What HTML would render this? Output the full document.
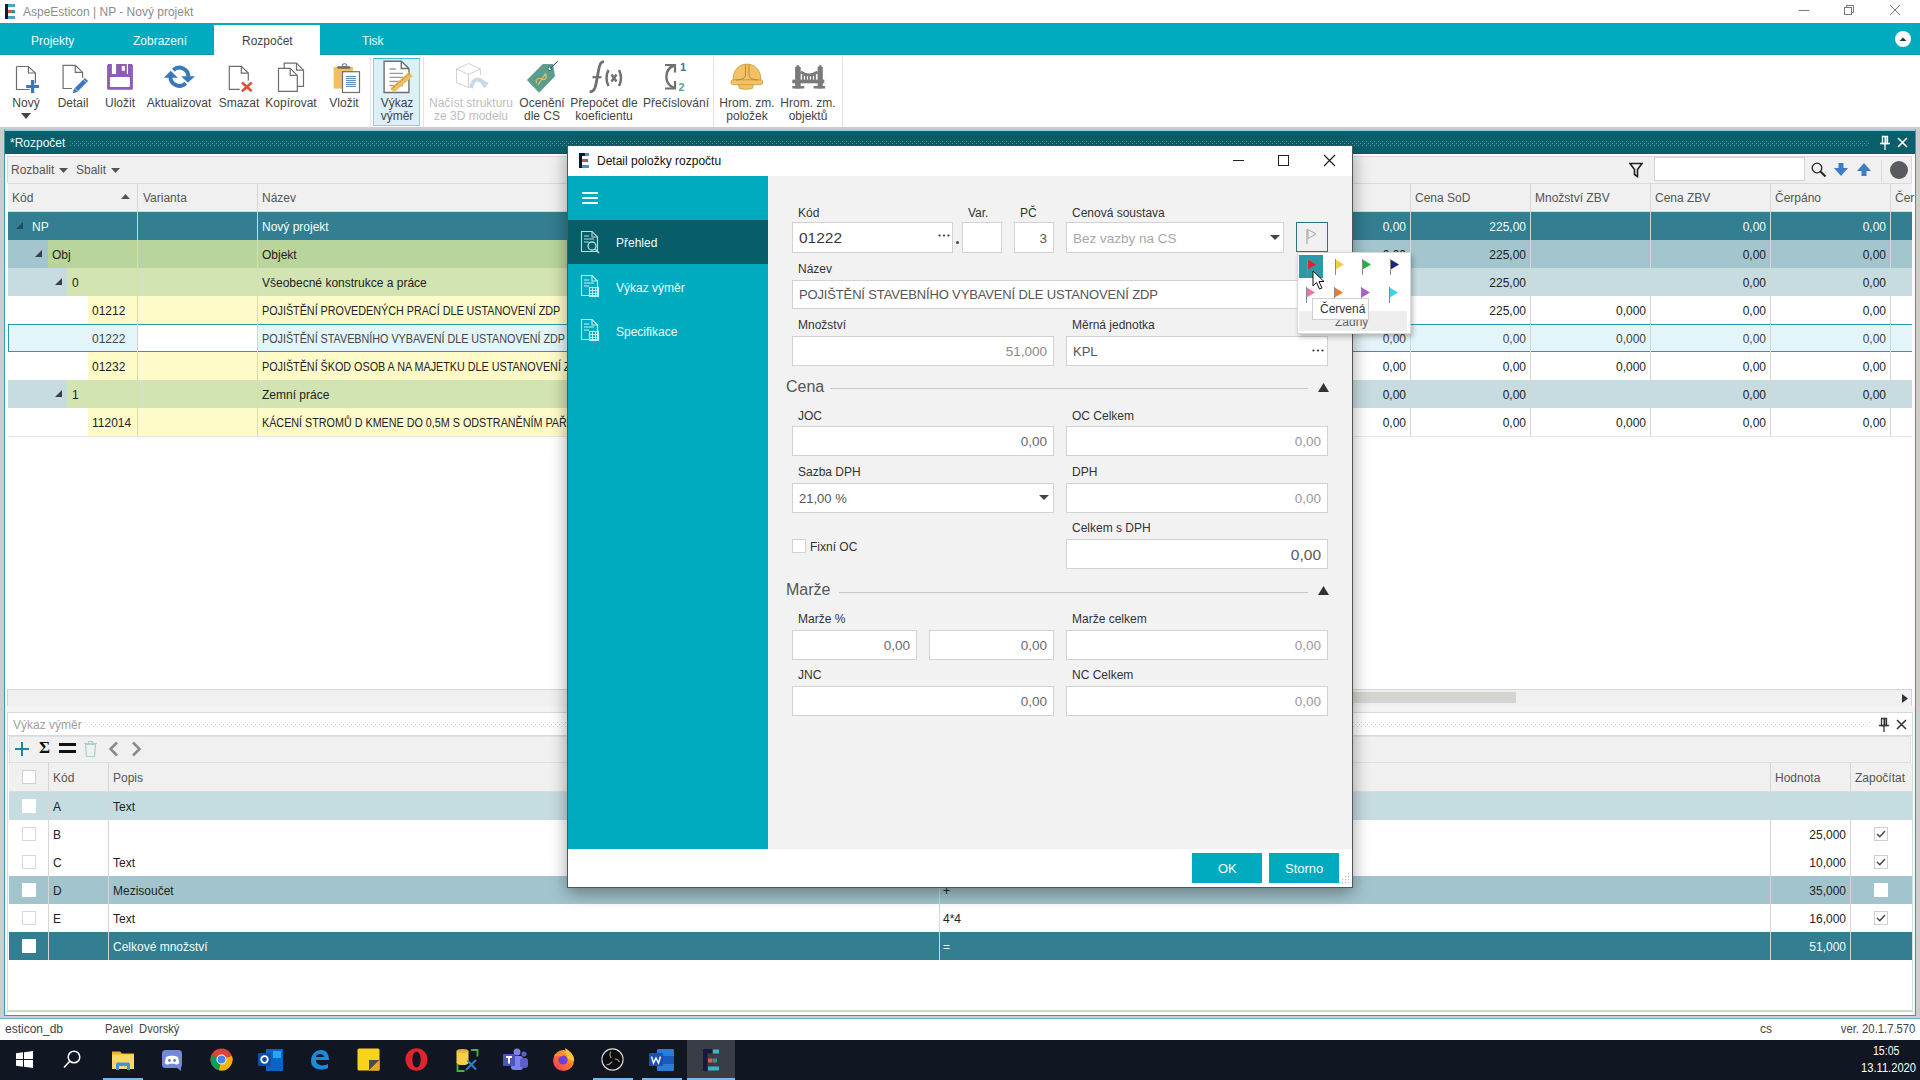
<!DOCTYPE html>
<html><head><meta charset="utf-8">
<style>
*{box-sizing:border-box;margin:0;padding:0}
html,body{width:1920px;height:1080px;overflow:hidden;background:#fff;font-family:"Liberation Sans",sans-serif;font-size:12px;color:#333}
.a{position:absolute}
.t{position:absolute;white-space:nowrap;line-height:1}
</style></head><body>

<div class="a" style="left:0px;top:0px;width:1920px;height:23px;background:#fff;"></div>
<div class="a" style="left:5px;top:4px;width:3px;height:15px;background:#141a33;"></div>
<div class="a" style="left:8px;top:4px;width:7px;height:3px;background:#4aa3c0;"></div>
<div class="a" style="left:8px;top:10px;width:4px;height:3px;background:#d9553a;"></div>
<div class="a" style="left:12px;top:10px;width:3px;height:3px;background:#2f8fa8;"></div>
<div class="a" style="left:8px;top:16px;width:7px;height:3px;background:#4aa3c0;"></div>
<div class="t" style="left:23px;top:6px;color:#8c8c8c;font-size:12px;">AspeEsticon | NP - Nový projekt</div>
<div class="a" style="left:1799px;top:10px;width:10px;height:1px;background:#777;"></div>
<svg class="a" style="left:1843px;top:4px;" width="12" height="12" viewBox="0 0 12 12"><rect x="1.5" y="3.5" width="7" height="7" fill="none" stroke="#777"/><path d="M3.5 3.5V1.5h7v7h-2" fill="none" stroke="#777"/></svg>
<svg class="a" style="left:1889px;top:4px;" width="12" height="12" viewBox="0 0 12 12"><path d="M1 1L11 11M11 1L1 11" stroke="#777" stroke-width="1"/></svg>
<div class="a" style="left:0px;top:23px;width:1920px;height:32px;background:#00abbf;"></div>
<div class="a" style="left:0px;top:54px;width:1920px;height:1px;background:#1593a4;"></div>
<div class="a" style="left:214px;top:25px;width:106px;height:30px;background:#fff;"></div>
<div class="t" style="left:31px;top:35px;color:#eaffff;font-size:12px;">Projekty</div>
<div class="t" style="left:133px;top:35px;color:#eaffff;font-size:12px;">Zobrazení</div>
<div class="t" style="left:242px;top:35px;color:#444;font-size:12px;">Rozpočet</div>
<div class="t" style="left:362px;top:35px;color:#eaffff;font-size:12px;">Tisk</div>
<svg class="a" style="left:1895px;top:31px;" width="16" height="16" viewBox="0 0 16 16"><circle cx="8" cy="8" r="8" fill="#fff"/><path d="M4.5 10L8 6.5L11.5 10Z" fill="#333"/></svg>
<div class="a" style="left:0px;top:55px;width:1920px;height:72px;background:#fff;"></div>
<div class="a" style="left:373px;top:58px;width:47px;height:68px;background:#dcf0f7;border:1px solid #86d3df;border-top:1px solid #3fb9c8"></div>
<div class="a" style="left:370px;top:57px;width:1px;height:70px;background:#e2e2e2;"></div>
<div class="a" style="left:423px;top:57px;width:1px;height:70px;background:#e2e2e2;"></div>
<div class="a" style="left:713px;top:57px;width:1px;height:70px;background:#e2e2e2;"></div>
<div class="a" style="left:842px;top:57px;width:1px;height:70px;background:#e2e2e2;"></div>
<svg class="a" style="left:14px;top:64px;" width="28" height="32" viewBox="0 0 28 32"><path d="M2.5 2.5H14.4L21.4 9V19.5M15.7 25.5H2.5V2.5" fill="none" stroke="#6e6e6e" stroke-width="1.2"/><path d="M14.4 2.5V9H21.4" fill="none" stroke="#6e6e6e" stroke-width="1.2"/><path d="M12.2 22.5H25M18.6 16V29" stroke="#3a78bd" stroke-width="3.2"/></svg>
<svg class="a" style="left:62px;top:64px;" width="30" height="32" viewBox="0 0 30 32"><path d="M13.3 1.3L20.6 8.4V13.7M10 24.5H1.1V1.3H13.3" fill="none" stroke="#6e6e6e" stroke-width="1.2"/><path d="M13.3 1.3V8.4H20.6" fill="none" stroke="#6e6e6e" stroke-width="1.2"/><path d="M10.8 29.2L11.9 24.9L22.9 13.9L26.1 17.1L15.1 28.1Z" fill="#3a78bd"/><path d="M21.3 15.5L24.5 18.7M12.6 24.2L15.8 27.4" stroke="#dceaf7" stroke-width="0.8"/></svg>
<svg class="a" style="left:106px;top:63px;" width="28" height="28" viewBox="0 0 28 28"><rect x="1.1" y="1" width="25.8" height="25.7" rx="1.5" fill="#8c5db4"/><rect x="5.9" y="0" width="4.2" height="11" fill="#fff"/><rect x="20.8" y="0" width="1.2" height="11" fill="#fff"/><rect x="15.8" y="2.9" width="3.1" height="4.9" fill="#fff"/><rect x="3.9" y="14" width="20" height="10.1" rx="1" fill="#fff"/></svg>
<svg class="a" style="left:163px;top:64px;" width="34" height="26" viewBox="0 0 34 26"><path d="M10.3 6.1A9 9 0 0 1 25.4 12.8" fill="none" stroke="#3a78bd" stroke-width="4"/><path d="M22.8 19.2A9 9 0 0 1 7.4 12.8" fill="none" stroke="#3a78bd" stroke-width="4"/><path d="M18 12.2H32L24.9 18.7Z" fill="#3a78bd"/><path d="M0.9 13.7H14.8L7.7 6.7Z" fill="#3a78bd"/></svg>
<svg class="a" style="left:228px;top:64px;" width="26" height="30" viewBox="0 0 26 30"><path d="M11.7 25.3H1.3V2.3H13.3L20.3 9.1V16.4" fill="none" stroke="#6e6e6e" stroke-width="1.2"/><path d="M13.3 2.3V9.1H20.3" fill="none" stroke="#6e6e6e" stroke-width="1.2"/><path d="M14 18.5L23.7 27.3M23.7 18.5L14 27.3" stroke="#d9553a" stroke-width="2.6"/></svg>
<svg class="a" style="left:276px;top:62px;" width="32" height="32" viewBox="0 0 32 32"><path d="M8.2 1.2H20.5L27.5 8.2V24.4H8.2Z" fill="#fff" stroke="#6e6e6e" stroke-width="1.2"/><path d="M20.5 1.2V8.2H27.5" fill="none" stroke="#6e6e6e" stroke-width="1.2"/><path d="M2.5 6.4H14.2L21.3 13.4V29.3H2.5Z" fill="#fff" stroke="#6e6e6e" stroke-width="1.2"/><path d="M14.2 6.4V13.4H21.3" fill="none" stroke="#6e6e6e" stroke-width="1.2"/></svg>
<svg class="a" style="left:332px;top:62px;" width="30" height="32" viewBox="0 0 30 32"><rect x="1.6" y="5" width="19.4" height="21.6" fill="#f0c060"/><rect x="5" y="4.2" width="13.5" height="2.6" rx="1.3" fill="#6a6a6a"/><ellipse cx="12.5" cy="3.2" rx="2.2" ry="1.5" fill="none" stroke="#6a6a6a" stroke-width="1"/><rect x="10.5" y="9.7" width="17" height="20.8" fill="#fff" stroke="#707070" stroke-width="1.2"/><path d="M14 14.4H23.8M14 16.4H23.8M14 18.4H23.8M14 20.4H23.8M14 22.4H23.8M14 24.4H23.8" stroke="#3a6fb0" stroke-width="0.9"/></svg>
<svg class="a" style="left:383px;top:60px;" width="31" height="34" viewBox="0 0 31 34"><path d="M1.1 1.2H18.3L25.9 8.5V32.5H1.1Z" fill="#fff" stroke="#6e6e6e" stroke-width="1.4"/><path d="M18.3 1.2V8.5H25.9" fill="none" stroke="#6e6e6e" stroke-width="1.4"/><path d="M6.5 9H12.8M6.5 13.4H20M6.5 17.4H20M6.5 21.5H20M6.5 25.5H20" stroke="#9a9a9a" stroke-width="1.4"/><path d="M7.36 28.28L26.06 12.08L29.74 16.32L11.04 32.52Z" fill="#efbd5e"/><path d="M8.3 29.3L26.9 13.1" stroke="#8a6a30" stroke-width="1" stroke-dasharray="1 1"/></svg>
<svg class="a" style="left:455px;top:62px;" width="34" height="30" viewBox="0 0 34 30"><path d="M1.5 7L13.5 1.5L25.5 7L13.5 12.5Z" fill="none" stroke="#d2d2d2" stroke-width="1"/><path d="M1.5 7V20.5L13.5 25.5V12.5M25.5 7V13" fill="none" stroke="#d2d2d2" stroke-width="1"/><path d="M16 26Q19 12 29 21" fill="none" stroke="#c8d9e8" stroke-width="4"/><path d="M25 20H34L29.5 26.5Z" fill="#c8d9e8"/></svg>
<svg class="a" style="left:525px;top:60px;" width="36" height="36" viewBox="0 0 36 36"><path d="M1.9 20L17.8 4.1H28L30 16.3L14 32.7Z" fill="#5b9e8d"/><circle cx="24.8" cy="8.8" r="2.4" fill="#3d7566"/><circle cx="24.8" cy="8.8" r="1.3" fill="#fff"/><path d="M24.8 8.8L32.8 1.3" stroke="#444" stroke-width="1"/><path d="M12 23C9 20 14 17 17 19C20 21 23 17 20 14M13 25L21 13" fill="none" stroke="#e8c35a" stroke-width="1.2"/></svg>
<svg class="a" style="left:588px;top:60px;" width="38" height="36" viewBox="0 0 38 36"><path d="M1.6 31.7C5 32 7 30 8 24L11 8C12 3 14 1.7 16 1.7" fill="none" stroke="#707070" stroke-width="2.8"/><path d="M4.5 17.2H13.5" stroke="#707070" stroke-width="2.2"/><path d="M20.5 10Q16.5 18 20.5 26M31 10Q35 18 31 26" fill="none" stroke="#707070" stroke-width="2.5"/><path d="M23.5 14.5L28.5 21.5M28.5 14.5L23.5 21.5" stroke="#707070" stroke-width="2.5"/></svg>
<svg class="a" style="left:662px;top:61px;" width="30" height="32" viewBox="0 0 30 32"><path d="M12.2 4.5C2 8 1.5 23 12.2 27" fill="none" stroke="#707070" stroke-width="2.4"/><path d="M3 4H13V11.5M3 27.5H13V20" fill="none" stroke="#707070" stroke-width="2.2"/><text x="18" y="9.5" font-family="Liberation Sans" font-weight="bold" font-size="11" fill="#3a6fb0">1</text><text x="16.5" y="29.5" font-family="Liberation Sans" font-weight="bold" font-size="11" fill="#5a9e8f">2</text></svg>
<svg class="a" style="left:730px;top:63px;" width="34" height="28" viewBox="0 0 34 28"><path d="M3 17C3 7 9 1.1 16.8 1.1C24.6 1.1 31 7 31 17Z" fill="#f2c263" stroke="#c99a45" stroke-width="0.8"/><rect x="0.9" y="16.9" width="31.9" height="4.8" rx="2.4" fill="#f2c263" stroke="#c99a45" stroke-width="0.8"/><path d="M8.4 21.7H23.4L22.4 25.5Q16 27.2 9.4 25.5Z" fill="#f2c263" stroke="#c99a45" stroke-width="0.8"/><path d="M15.5 1.5V12Q15.5 16.5 6 17M19 1.5V12Q19 16.5 28 17" fill="none" stroke="#b58840" stroke-width="1"/></svg>
<svg class="a" style="left:791px;top:63px;" width="36" height="28" viewBox="0 0 36 28"><rect x="4.1" y="4" width="5.6" height="21.5" fill="#7a7a7a"/><rect x="26.6" y="4" width="5.2" height="21.5" fill="#7a7a7a"/><circle cx="6.9" cy="3.5" r="1.6" fill="#7a7a7a"/><circle cx="29.2" cy="3.5" r="1.6" fill="#7a7a7a"/><rect x="1.3" y="16.6" width="32" height="3.7" fill="#7a7a7a"/><rect x="1.3" y="23" width="12" height="2.5" fill="#7a7a7a"/><rect x="22.6" y="23" width="11.5" height="2.5" fill="#7a7a7a"/><path d="M9.7 9Q18 15 26.6 9" fill="none" stroke="#7a7a7a" stroke-width="3"/><path d="M12 11.5V17M15 12.7V17M18 13V17M21 12.7V17M24 11.5V17" stroke="#7a7a7a" stroke-width="1.8"/></svg>
<div class="t" style="left:-74px;width:200px;text-align:center;top:97px;color:#444;font-size:12px">Nový</div>
<svg class="a" style="left:21px;top:113px;" width="10" height="6" viewBox="0 0 10 6"><path d="M0 0H10L5 6Z" fill="#444"/></svg>
<div class="t" style="left:-27px;width:200px;text-align:center;top:97px;color:#444;font-size:12px">Detail</div>
<div class="t" style="left:20px;width:200px;text-align:center;top:97px;color:#444;font-size:12px">Uložit</div>
<div class="t" style="left:79px;width:200px;text-align:center;top:97px;color:#444;font-size:12px">Aktualizovat</div>
<div class="t" style="left:139px;width:200px;text-align:center;top:97px;color:#444;font-size:12px">Smazat</div>
<div class="t" style="left:191px;width:200px;text-align:center;top:97px;color:#444;font-size:12px">Kopírovat</div>
<div class="t" style="left:244px;width:200px;text-align:center;top:97px;color:#444;font-size:12px">Vložit</div>
<div class="t" style="left:297px;width:200px;text-align:center;top:97px;color:#444;font-size:12px">Výkaz</div>
<div class="t" style="left:297px;width:200px;text-align:center;top:110px;color:#444;font-size:12px">výměr</div>
<div class="t" style="left:371px;width:200px;text-align:center;top:97px;color:#bdbdbd;font-size:12px">Načíst strukturu</div>
<div class="t" style="left:371px;width:200px;text-align:center;top:110px;color:#bdbdbd;font-size:12px">ze 3D modelu</div>
<div class="t" style="left:442px;width:200px;text-align:center;top:97px;color:#444;font-size:12px">Ocenění</div>
<div class="t" style="left:442px;width:200px;text-align:center;top:110px;color:#444;font-size:12px">dle CS</div>
<div class="t" style="left:504px;width:200px;text-align:center;top:97px;color:#444;font-size:12px">Přepočet dle</div>
<div class="t" style="left:504px;width:200px;text-align:center;top:110px;color:#444;font-size:12px">koeficientu</div>
<div class="t" style="left:576px;width:200px;text-align:center;top:97px;color:#444;font-size:12px">Přečíslování</div>
<div class="t" style="left:647px;width:200px;text-align:center;top:97px;color:#444;font-size:12px">Hrom. zm.</div>
<div class="t" style="left:647px;width:200px;text-align:center;top:110px;color:#444;font-size:12px">položek</div>
<div class="t" style="left:708px;width:200px;text-align:center;top:97px;color:#444;font-size:12px">Hrom. zm.</div>
<div class="t" style="left:708px;width:200px;text-align:center;top:110px;color:#444;font-size:12px">objektů</div>
<div class="a" style="left:0px;top:127px;width:1920px;height:892px;background:#cdcdcd;"></div>
<div class="a" style="left:4px;top:129px;width:1912px;height:887px;background:#fff;border:1px solid #3c9aa8;border-top:2px solid #8fd3dc"></div>
<div class="a" style="left:5px;top:131px;width:1px;height:884px;background:#d8f8fb;"></div>
<div class="a" style="left:1914px;top:131px;width:1px;height:884px;background:#d8f8fb;"></div>
<div class="a" style="left:5px;top:131px;width:1910px;height:23px;background:#0b5f6a;"></div>
<div class="t" style="left:10px;top:137px;color:#e6ffff;font-size:12px;">*Rozpočet</div>
<svg class="a" style="left:70px;top:140px;" width="1800" height="7" viewBox="0 0 1800 7"><defs><pattern id="dp1" width="4" height="4" patternUnits="userSpaceOnUse"><rect x="0" y="1" width="1" height="1" fill="#4f9aa2"/><rect x="2" y="3" width="1" height="1" fill="#5aa9b1"/></pattern></defs><rect x="0" y="0" width="1800" height="7" fill="url(#dp1)"/></svg>
<svg class="a" style="left:1880px;top:135px;" width="10" height="15" viewBox="0 0 10 15"><path d="M2.5 1.5H7.5V8.5H2.5Z" fill="none" stroke="#fff" stroke-width="1.3"/><path d="M0 8.5H10M5 8.5V15" stroke="#fff" stroke-width="1.3"/><path d="M5.5 2V8" stroke="#fff" stroke-width="2"/></svg>
<svg class="a" style="left:1897px;top:137px;" width="11" height="11" viewBox="0 0 11 11"><path d="M1 1L10 10M10 1L1 10" stroke="#fff" stroke-width="1.6"/></svg>
<div class="a" style="left:5px;top:154px;width:1910px;height:552px;background:#fff;"></div>
<div class="a" style="left:7px;top:156px;width:1905px;height:27px;background:#f0f0f0;border:1px solid #dadada;border-bottom:none"></div>
<div class="t" style="left:11px;top:164px;color:#555;font-size:12px;">Rozbalit</div>
<svg class="a" style="left:59px;top:168px;" width="9" height="5" viewBox="0 0 9 5"><path d="M0 0H9L4.5 5Z" fill="#555"/></svg>
<div class="t" style="left:76px;top:164px;color:#555;font-size:12px;">Sbalit</div>
<svg class="a" style="left:111px;top:168px;" width="9" height="5" viewBox="0 0 9 5"><path d="M0 0H9L4.5 5Z" fill="#555"/></svg>
<svg class="a" style="left:1629px;top:162px;" width="14" height="16" viewBox="0 0 14 16"><path d="M1 1.5H13L8.5 7.5V14.5L5.5 12.5V7.5Z" fill="none" stroke="#222" stroke-width="1.6"/></svg>
<div class="a" style="left:1654px;top:157px;width:151px;height:24px;background:#fff;border:1px solid #d4d4d4"></div>
<svg class="a" style="left:1811px;top:162px;" width="16" height="16" viewBox="0 0 16 16"><circle cx="6" cy="6" r="4.8" fill="none" stroke="#222" stroke-width="1.3"/><path d="M9.5 9.5L14.5 14.5" stroke="#222" stroke-width="2"/></svg>
<svg class="a" style="left:1834px;top:163px;" width="14" height="13" viewBox="0 0 14 13"><path d="M4.5 0H9.5V5H14L7 13L0 5H4.5Z" fill="#3e7cc4"/></svg>
<svg class="a" style="left:1857px;top:163px;" width="14" height="13" viewBox="0 0 14 13"><path d="M4.5 13H9.5V8H14L7 0L0 8H4.5Z" fill="#3e7cc4"/></svg>
<div class="a" style="left:1881px;top:160px;width:1px;height:22px;background:#d8d8d8;"></div>
<svg class="a" style="left:1889px;top:160px;" width="20" height="20" viewBox="0 0 20 20"><circle cx="10" cy="10" r="9" fill="#5a5b60"/></svg>
<div class="a" style="left:8px;top:183px;width:1904px;height:29px;background:#f0f0f0;border-top:1px solid #dadada;border-bottom:1px solid #d9d9d9"></div>
<div class="t" style="left:12px;top:192px;color:#555;font-size:12px;">Kód</div>
<svg class="a" style="left:121px;top:194px;" width="9" height="5" viewBox="0 0 9 5"><path d="M0 5H9L4.5 0Z" fill="#555"/></svg>
<div class="t" style="left:143px;top:192px;color:#555;font-size:12px;">Varianta</div>
<div class="t" style="left:262px;top:192px;color:#555;font-size:12px;">Název</div>
<div class="t" style="left:1415px;top:192px;color:#555;font-size:12px;">Cena SoD</div>
<div class="t" style="left:1535px;top:192px;color:#555;font-size:12px;">Množství ZBV</div>
<div class="t" style="left:1655px;top:192px;color:#555;font-size:12px;">Cena ZBV</div>
<div class="t" style="left:1775px;top:192px;color:#555;font-size:12px;">Čerpáno</div>
<div class="t" style="left:1895px;top:192px;color:#555;font-size:12px;">Čer</div>
<div class="a" style="left:8px;top:212px;width:1904px;height:28px;background:#337e90;"></div>
<svg class="a" style="left:16px;top:222px;" width="7" height="7" viewBox="0 0 7 7"><path d="M7 0V7H0Z" fill="#1d4f5a"/></svg>
<div class="t" style="left:32px;top:221px;color:#f0ffff;font-size:12px;">NP</div>
<div class="t" style="left:262px;top:221px;color:#f0ffff;font-size:12px;">Nový projekt</div>
<div class="t" style="right:514px;top:221px;color:#f0ffff;font-size:12px;">0,00</div>
<div class="t" style="right:394px;top:221px;color:#f0ffff;font-size:12px;">225,00</div>
<div class="t" style="right:154px;top:221px;color:#f0ffff;font-size:12px;">0,00</div>
<div class="t" style="right:34px;top:221px;color:#f0ffff;font-size:12px;">0,00</div>
<div class="a" style="left:8px;top:240px;width:1904px;height:28px;background:#a3c5cd;"></div>
<div class="a" style="left:48px;top:240px;width:1242px;height:28px;background:#b9d59c;"></div>
<svg class="a" style="left:35px;top:250px;" width="7" height="7" viewBox="0 0 7 7"><path d="M7 0V7H0Z" fill="#3a3f44"/></svg>
<div class="t" style="left:52px;top:249px;color:#222;font-size:12px;">Obj</div>
<div class="t" style="left:262px;top:249px;color:#222;font-size:12px;">Objekt</div>
<div class="t" style="right:514px;top:249px;color:#222;font-size:12px;">0,00</div>
<div class="t" style="right:394px;top:249px;color:#222;font-size:12px;">225,00</div>
<div class="t" style="right:154px;top:249px;color:#222;font-size:12px;">0,00</div>
<div class="t" style="right:34px;top:249px;color:#222;font-size:12px;">0,00</div>
<div class="a" style="left:8px;top:268px;width:1904px;height:28px;background:#c6dce1;"></div>
<div class="a" style="left:67px;top:268px;width:1223px;height:28px;background:#d2e4b1;"></div>
<svg class="a" style="left:55px;top:278px;" width="7" height="7" viewBox="0 0 7 7"><path d="M7 0V7H0Z" fill="#3a3f44"/></svg>
<div class="t" style="left:72px;top:277px;color:#222;font-size:12px;">0</div>
<div class="t" style="left:262px;top:277px;color:#222;font-size:12px;">Všeobecné konstrukce a práce</div>
<div class="t" style="right:514px;top:277px;color:#222;font-size:12px;">0,00</div>
<div class="t" style="right:394px;top:277px;color:#222;font-size:12px;">225,00</div>
<div class="t" style="right:154px;top:277px;color:#222;font-size:12px;">0,00</div>
<div class="t" style="right:34px;top:277px;color:#222;font-size:12px;">0,00</div>
<div class="a" style="left:8px;top:296px;width:1904px;height:28px;background:#fff;"></div>
<div class="a" style="left:88px;top:296px;width:1202px;height:28px;background:#fffbc9;"></div>
<div class="t" style="left:92px;top:305px;color:#222;font-size:12px;">01212</div>
<div class="t" style="left:262px;top:305px;color:#222;font-size:12px;transform:scaleX(0.897);transform-origin:0 0">POJIŠTĚNÍ PROVEDENÝCH PRACÍ DLE USTANOVENÍ ZDP</div>
<div class="t" style="right:514px;top:305px;color:#222;font-size:12px;">0,00</div>
<div class="t" style="right:394px;top:305px;color:#222;font-size:12px;">225,00</div>
<div class="t" style="right:274px;top:305px;color:#222;font-size:12px;">0,000</div>
<div class="t" style="right:154px;top:305px;color:#222;font-size:12px;">0,00</div>
<div class="t" style="right:34px;top:305px;color:#222;font-size:12px;">0,00</div>
<div class="a" style="left:8px;top:324px;width:1904px;height:28px;background:#e4f5f9;border-top:1px solid #2a9aa8;border-bottom:1px solid #2a9aa8"></div>
<div class="a" style="left:138px;top:325px;width:119px;height:26px;background:#fff;"></div>
<div class="a" style="left:8px;top:324px;width:1px;height:28px;background:#2a9aa8;"></div>
<div class="t" style="left:92px;top:333px;color:#444;font-size:12px;">01222</div>
<div class="t" style="left:262px;top:333px;color:#444;font-size:12px;transform:scaleX(0.897);transform-origin:0 0">POJIŠTĚNÍ STAVEBNÍHO VYBAVENÍ DLE USTANOVENÍ ZDP</div>
<div class="t" style="right:514px;top:333px;color:#444;font-size:12px;">0,00</div>
<div class="t" style="right:394px;top:333px;color:#444;font-size:12px;">0,00</div>
<div class="t" style="right:274px;top:333px;color:#444;font-size:12px;">0,000</div>
<div class="t" style="right:154px;top:333px;color:#444;font-size:12px;">0,00</div>
<div class="t" style="right:34px;top:333px;color:#444;font-size:12px;">0,00</div>
<div class="a" style="left:8px;top:352px;width:1904px;height:28px;background:#fff;"></div>
<div class="a" style="left:88px;top:352px;width:1202px;height:28px;background:#fffbc9;"></div>
<div class="t" style="left:92px;top:361px;color:#222;font-size:12px;">01232</div>
<div class="t" style="left:262px;top:361px;color:#222;font-size:12px;transform:scaleX(0.897);transform-origin:0 0">POJIŠTĚNÍ ŠKOD OSOB A NA MAJETKU DLE USTANOVENÍ ZDP</div>
<div class="t" style="right:514px;top:361px;color:#222;font-size:12px;">0,00</div>
<div class="t" style="right:394px;top:361px;color:#222;font-size:12px;">0,00</div>
<div class="t" style="right:274px;top:361px;color:#222;font-size:12px;">0,000</div>
<div class="t" style="right:154px;top:361px;color:#222;font-size:12px;">0,00</div>
<div class="t" style="right:34px;top:361px;color:#222;font-size:12px;">0,00</div>
<div class="a" style="left:8px;top:380px;width:1904px;height:28px;background:#c6dce1;"></div>
<div class="a" style="left:67px;top:380px;width:1223px;height:28px;background:#d2e4b1;"></div>
<svg class="a" style="left:55px;top:390px;" width="7" height="7" viewBox="0 0 7 7"><path d="M7 0V7H0Z" fill="#3a3f44"/></svg>
<div class="t" style="left:72px;top:389px;color:#222;font-size:12px;">1</div>
<div class="t" style="left:262px;top:389px;color:#222;font-size:12px;">Zemní práce</div>
<div class="t" style="right:514px;top:389px;color:#222;font-size:12px;">0,00</div>
<div class="t" style="right:394px;top:389px;color:#222;font-size:12px;">0,00</div>
<div class="t" style="right:154px;top:389px;color:#222;font-size:12px;">0,00</div>
<div class="t" style="right:34px;top:389px;color:#222;font-size:12px;">0,00</div>
<div class="a" style="left:8px;top:408px;width:1904px;height:28px;background:#fff;"></div>
<div class="a" style="left:88px;top:408px;width:1202px;height:28px;background:#fffbc9;"></div>
<div class="t" style="left:92px;top:417px;color:#222;font-size:12px;">112014</div>
<div class="t" style="left:262px;top:417px;color:#222;font-size:12px;transform:scaleX(0.897);transform-origin:0 0">KÁCENÍ STROMŮ D KMENE DO 0,5M S ODSTRANĚNÍM PAŘEZŮ</div>
<div class="t" style="right:514px;top:417px;color:#222;font-size:12px;">0,00</div>
<div class="t" style="right:394px;top:417px;color:#222;font-size:12px;">0,00</div>
<div class="t" style="right:274px;top:417px;color:#222;font-size:12px;">0,000</div>
<div class="t" style="right:154px;top:417px;color:#222;font-size:12px;">0,00</div>
<div class="t" style="right:34px;top:417px;color:#222;font-size:12px;">0,00</div>
<div class="a" style="left:137px;top:183px;width:1px;height:253px;background:#d6d6d6;"></div>
<div class="a" style="left:257px;top:183px;width:1px;height:253px;background:#d6d6d6;"></div>
<div class="a" style="left:1290px;top:183px;width:1px;height:253px;background:#d6d6d6;"></div>
<div class="a" style="left:1410px;top:183px;width:1px;height:253px;background:#d6d6d6;"></div>
<div class="a" style="left:1530px;top:183px;width:1px;height:253px;background:#d6d6d6;"></div>
<div class="a" style="left:1650px;top:183px;width:1px;height:253px;background:#d6d6d6;"></div>
<div class="a" style="left:1770px;top:183px;width:1px;height:253px;background:#d6d6d6;"></div>
<div class="a" style="left:1890px;top:183px;width:1px;height:253px;background:#d6d6d6;"></div>
<div class="a" style="left:8px;top:436px;width:1904px;height:1px;background:#e6e6e6;"></div>
<div class="a" style="left:7px;top:689px;width:1905px;height:18px;background:#f0f0f0;border:1px solid #d4d4d4"></div>
<div class="a" style="left:1352px;top:692px;width:164px;height:11px;background:#d5d5cf;"></div>
<svg class="a" style="left:1902px;top:694px;" width="6" height="9" viewBox="0 0 6 9"><path d="M0 0L6 4.5L0 9Z" fill="#333"/></svg>
<div class="a" style="left:5px;top:706px;width:1910px;height:6px;background:#f3f3f3;"></div>
<div class="a" style="left:7px;top:712px;width:1906px;height:24px;background:#fff;border:1px solid #d9d9d9"></div>
<div class="t" style="left:13px;top:719px;color:#a0a0a0;font-size:12px;">Výkaz výměr</div>
<svg class="a" style="left:85px;top:721px;" width="1785" height="7" viewBox="0 0 1785 7"><defs><pattern id="dp2" width="4" height="4" patternUnits="userSpaceOnUse"><rect x="0" y="1" width="1" height="1" fill="#dcdcdc"/><rect x="2" y="3" width="1" height="1" fill="#dcdcdc"/></pattern></defs><rect x="0" y="0" width="1785" height="7" fill="url(#dp2)"/></svg>
<svg class="a" style="left:1879px;top:717px;" width="10" height="15" viewBox="0 0 10 15"><path d="M2.5 1.5H7.5V8.5H2.5Z" fill="none" stroke="#333" stroke-width="1.3"/><path d="M0 8.5H10M5 8.5V15" stroke="#333" stroke-width="1.3"/><path d="M5.5 2V8" stroke="#333" stroke-width="2"/></svg>
<svg class="a" style="left:1896px;top:719px;" width="11" height="11" viewBox="0 0 11 11"><path d="M1 1L10 10M10 1L1 10" stroke="#333" stroke-width="1.5"/></svg>
<div class="a" style="left:7px;top:736px;width:1906px;height:276px;background:#fff;border-left:1px solid #d9d9d9;border-right:1px solid #d9d9d9;border-bottom:2px solid #d6d2cb"></div>
<div class="a" style="left:9px;top:736px;width:1902px;height:27px;background:#f0f0f0;border:1px solid #e0e0e0"></div>
<svg class="a" style="left:14px;top:741px;" width="16" height="16" viewBox="0 0 16 16"><path d="M8 1V15M1 8H15" stroke="#1b8a97" stroke-width="2"/></svg>
<div class="t" style="left:39px;top:739px;color:#111;font-size:17px;font-weight:bold;font-family:Liberation Serif">Σ</div>
<svg class="a" style="left:59px;top:743px;" width="17" height="10" viewBox="0 0 17 10"><rect x="0" y="0" width="17" height="3" fill="#111"/><rect x="0" y="7" width="17" height="3" fill="#111"/></svg>
<svg class="a" style="left:83px;top:740px;" width="15" height="17" viewBox="0 0 15 17"><path d="M2.5 4.5H12.5L11.5 16.5H3.5Z" fill="none" stroke="#a9cfd3" stroke-width="1.2"/><path d="M1 3.5H14M5.5 3.5V1.5H9.5V3.5" fill="none" stroke="#a9cfd3" stroke-width="1.2"/></svg>
<svg class="a" style="left:108px;top:741px;" width="11" height="16" viewBox="0 0 11 16"><path d="M9 1.5L2.5 8L9 14.5" fill="none" stroke="#8a8a8a" stroke-width="2.5"/></svg>
<svg class="a" style="left:131px;top:741px;" width="11" height="16" viewBox="0 0 11 16"><path d="M2 1.5L8.5 8L2 14.5" fill="none" stroke="#8a8a8a" stroke-width="2.5"/></svg>
<div class="a" style="left:9px;top:763px;width:1903px;height:29px;background:#f0f0f0;border-bottom:1px solid #dcdcdc"></div>
<div class="a" style="left:22px;top:770px;width:14px;height:14px;background:#fff;border:1px solid #cfcfcf"></div>
<div class="t" style="left:53px;top:772px;color:#555;font-size:12px;">Kód</div>
<div class="t" style="left:113px;top:772px;color:#555;font-size:12px;">Popis</div>
<div class="t" style="left:1775px;top:772px;color:#555;font-size:12px;">Hodnota</div>
<div class="t" style="left:1855px;top:772px;color:#555;font-size:12px;">Započítat</div>
<div class="a" style="left:9px;top:792px;width:1903px;height:28px;background:#c5dce1;"></div>
<div class="a" style="left:22px;top:799px;width:14px;height:14px;background:#fff;"></div>
<div class="t" style="left:53px;top:801px;color:#222;font-size:12px;">A</div>
<div class="t" style="left:113px;top:801px;color:#222;font-size:12px;">Text</div>
<div class="a" style="left:9px;top:820px;width:1903px;height:28px;background:#fff;"></div>
<div class="a" style="left:22px;top:827px;width:14px;height:14px;background:#fff;border:1px solid #d8d8d8"></div>
<div class="t" style="left:53px;top:829px;color:#222;font-size:12px;">B</div>
<div class="t" style="left:113px;top:829px;color:#222;font-size:12px;"></div>
<div class="t" style="right:74px;top:829px;color:#222;font-size:12px;">25,000</div>
<svg class="a" style="left:1874px;top:827px;" width="14" height="14" viewBox="0 0 14 14"><rect x="0.5" y="0.5" width="13" height="13" fill="#fff" stroke="#cfcfcf"/><path d="M3 7L5.8 9.8L11 4" fill="none" stroke="#444" stroke-width="1.4"/></svg>
<div class="a" style="left:9px;top:848px;width:1903px;height:28px;background:#fff;"></div>
<div class="a" style="left:22px;top:855px;width:14px;height:14px;background:#fff;border:1px solid #d8d8d8"></div>
<div class="t" style="left:53px;top:857px;color:#222;font-size:12px;">C</div>
<div class="t" style="left:113px;top:857px;color:#222;font-size:12px;">Text</div>
<div class="t" style="right:74px;top:857px;color:#222;font-size:12px;">10,000</div>
<svg class="a" style="left:1874px;top:855px;" width="14" height="14" viewBox="0 0 14 14"><rect x="0.5" y="0.5" width="13" height="13" fill="#fff" stroke="#cfcfcf"/><path d="M3 7L5.8 9.8L11 4" fill="none" stroke="#444" stroke-width="1.4"/></svg>
<div class="a" style="left:9px;top:876px;width:1903px;height:28px;background:#a2c5cd;"></div>
<div class="a" style="left:22px;top:883px;width:14px;height:14px;background:#fff;"></div>
<div class="t" style="left:53px;top:885px;color:#222;font-size:12px;">D</div>
<div class="t" style="left:113px;top:885px;color:#222;font-size:12px;">Mezisoučet</div>
<div class="t" style="left:943px;top:885px;color:#222;font-size:12px;">+</div>
<div class="t" style="right:74px;top:885px;color:#222;font-size:12px;">35,000</div>
<div class="a" style="left:1874px;top:883px;width:14px;height:14px;background:#fff;"></div>
<div class="a" style="left:9px;top:904px;width:1903px;height:28px;background:#fff;"></div>
<div class="a" style="left:22px;top:911px;width:14px;height:14px;background:#fff;border:1px solid #d8d8d8"></div>
<div class="t" style="left:53px;top:913px;color:#222;font-size:12px;">E</div>
<div class="t" style="left:113px;top:913px;color:#222;font-size:12px;">Text</div>
<div class="t" style="left:943px;top:913px;color:#222;font-size:12px;">4*4</div>
<div class="t" style="right:74px;top:913px;color:#222;font-size:12px;">16,000</div>
<svg class="a" style="left:1874px;top:911px;" width="14" height="14" viewBox="0 0 14 14"><rect x="0.5" y="0.5" width="13" height="13" fill="#fff" stroke="#cfcfcf"/><path d="M3 7L5.8 9.8L11 4" fill="none" stroke="#444" stroke-width="1.4"/></svg>
<div class="a" style="left:9px;top:932px;width:1903px;height:28px;background:#337e90;"></div>
<div class="a" style="left:22px;top:939px;width:14px;height:14px;background:#fff;"></div>
<div class="t" style="left:53px;top:941px;color:#f0ffff;font-size:12px;"></div>
<div class="t" style="left:113px;top:941px;color:#f0ffff;font-size:12px;">Celkové množství</div>
<div class="t" style="left:943px;top:941px;color:#f0ffff;font-size:12px;">=</div>
<div class="t" style="right:74px;top:941px;color:#f0ffff;font-size:12px;">51,000</div>
<div class="a" style="left:48px;top:763px;width:1px;height:197px;background:#d6d6d6;"></div>
<div class="a" style="left:108px;top:763px;width:1px;height:197px;background:#d6d6d6;"></div>
<div class="a" style="left:939px;top:763px;width:1px;height:197px;background:#d6d6d6;"></div>
<div class="a" style="left:1770px;top:763px;width:1px;height:197px;background:#d6d6d6;"></div>
<div class="a" style="left:1850px;top:763px;width:1px;height:197px;background:#d6d6d6;"></div>
<div class="a" style="left:0px;top:1016px;width:1920px;height:2px;background:#cdcdcd;"></div>
<div class="a" style="left:0px;top:1018px;width:1920px;height:1px;background:#66b3be;"></div>
<div class="a" style="left:0px;top:1019px;width:1920px;height:21px;background:#fff;"></div>
<div class="t" style="left:5px;top:1023px;color:#444;font-size:12px;">esticon_db</div>
<div class="t" style="left:105px;top:1023px;color:#444;font-size:12px;transform:scaleX(0.93);transform-origin:0 0">Pavel&nbsp; Dvorský</div>
<div class="t" style="left:1760px;top:1023px;color:#444;font-size:12px;">cs</div>
<div class="t" style="right:5px;top:1023px;color:#444;font-size:12px;transform:scaleX(0.94);transform-origin:100% 0">ver. 20.1.7.570</div>
<div class="a" style="left:0px;top:1040px;width:1920px;height:40px;background:#101722;"></div>
<svg class="a" style="left:16px;top:1051px;" width="17" height="17" viewBox="0 0 17 17"><path d="M0 2.3L7 1.3V8H0Z M8 1.2L17 0V8H8Z M0 9H7V15.7L0 14.7Z M8 9H17V17L8 15.8Z" fill="#fff"/></svg>
<svg class="a" style="left:63px;top:1050px;" width="18" height="19" viewBox="0 0 18 19"><circle cx="11" cy="7" r="5.8" fill="none" stroke="#fff" stroke-width="1.5"/><path d="M7 11L1 17.5" stroke="#fff" stroke-width="1.5"/></svg>
<div class="a" style="left:687px;top:1040px;width:48px;height:40px;background:#393e46;"></div>
<svg class="a" style="left:112px;top:1050px;" width="22" height="21" viewBox="0 0 22 21"><path d="M0 1.5H8L10 3.5H22V19H0Z" fill="#e9b52e"/><rect x="0" y="4.5" width="22" height="14.5" fill="#fcd966"/><path d="M4 20V14Q4 12.5 5.5 12.5H16.5Q18 12.5 18 14V20H15V16H7V20Z" fill="#3b95db"/></svg>
<div class="a" style="left:103px;top:1078px;width:40px;height:2px;background:#76b9ed;"></div>
<svg class="a" style="left:162px;top:1050px;" width="20" height="21" viewBox="0 0 20 21"><rect x="0" y="0" width="20" height="18" rx="3.5" fill="#7289da"/><path d="M14 17L19 21V13Z" fill="#7289da"/><path d="M4 7C7 5.3 13 5.3 16 7L17.3 13C15.5 14.8 13.5 15 12.8 13.8H7.2C6.5 15 4.5 14.8 2.7 13Z" fill="#fff"/><circle cx="7.4" cy="10.5" r="1.4" fill="#6a78c9"/><circle cx="12.6" cy="10.5" r="1.4" fill="#6a78c9"/></svg>
<svg class="a" style="left:210px;top:1048px;" width="23" height="23" viewBox="0 0 23 23"><circle cx="11.5" cy="11.5" r="11" fill="#db4437"/><path d="M11.5 11.5L1.5 7A11 11 0 0 0 9 22.2Z" fill="#0f9d58"/><path d="M11.5 11.5L22 8A11 11 0 0 1 9 22.2Z" fill="#f4b400"/><circle cx="11.5" cy="11.5" r="5" fill="#fff"/><circle cx="11.5" cy="11.5" r="4" fill="#4285f4"/></svg>
<svg class="a" style="left:258px;top:1049px;" width="25" height="22" viewBox="0 0 25 22"><rect x="8" y="0" width="17" height="22" fill="#0a64c8"/><rect x="15" y="2" width="8" height="7" fill="#28a8ea"/><rect x="0" y="4" width="13" height="13" rx="1" fill="#0f4fa8"/><circle cx="6.5" cy="10.5" r="3.3" fill="none" stroke="#fff" stroke-width="1.8"/></svg>
<svg class="a" style="left:309px;top:1049px;" width="21" height="21" viewBox="0 0 21 21"><path d="M2 12C2 4 8 1 12 1C18 1 20 6 20 11H7C7 16 13 18 19 15V19C13 22 2 21 2 12Z M7 8H15C15 4 7 4 7 8Z" fill="#1a8ae0"/></svg>
<svg class="a" style="left:357px;top:1048px;" width="23" height="23" viewBox="0 0 23 23"><rect x="0.5" y="0.5" width="22" height="22" rx="1.5" fill="#f9d21c"/><path d="M12 22.5V12H22.5Z" fill="#4a4a4a"/><path d="M12 22.5L22.5 12V22.5Z" fill="#e9a91a"/></svg>
<svg class="a" style="left:405px;top:1048px;" width="23" height="23" viewBox="0 0 23 23"><ellipse cx="11.5" cy="11.5" rx="11" ry="11.2" fill="#e0262c"/><ellipse cx="11.5" cy="11.5" rx="4.2" ry="8" fill="#101722"/></svg>
<svg class="a" style="left:456px;top:1048px;" width="24" height="25" viewBox="0 0 24 25"><rect x="0.5" y="3" width="12" height="12" fill="#f5d04a"/><ellipse cx="6.5" cy="3" rx="6" ry="2" fill="#eab040"/><ellipse cx="6.5" cy="15" rx="6" ry="2" fill="#f5d04a"/><path d="M15 2H21.5V8.5M1.5 16V23H8.5" fill="none" stroke="#4caf50" stroke-width="1.8"/><path d="M10 22L20 12M11.5 12.5L20 21.5" stroke="#2f7fc8" stroke-width="2"/></svg>
<svg class="a" style="left:503px;top:1048px;" width="25" height="23" viewBox="0 0 25 23"><circle cx="14" cy="4" r="3.5" fill="#7b83eb"/><circle cx="21" cy="6" r="2.6" fill="#5b5fc7"/><rect x="8" y="8" width="12" height="14" rx="3" fill="#7b83eb"/><rect x="17" y="10" width="8" height="10" rx="3" fill="#5b5fc7"/><rect x="0" y="6" width="12" height="12" rx="1" fill="#4b53bc"/><path d="M3 9H9M6 9V15.5" stroke="#fff" stroke-width="2"/></svg>
<svg class="a" style="left:552px;top:1047px;" width="24" height="25" viewBox="0 0 24 25"><defs><linearGradient id="ffg" x1="1" y1="0" x2="0" y2="1"><stop offset="0" stop-color="#ffd53a"/><stop offset="0.45" stop-color="#ff7a2a"/><stop offset="1" stop-color="#ff2a6a"/></linearGradient></defs><circle cx="11.5" cy="13.5" r="10.5" fill="url(#ffg)"/><path d="M13 1C18 4 23 9 22 14L16 12Z" fill="#ffc23a"/><circle cx="11" cy="13" r="4.6" fill="#6f3fd8"/><path d="M3 9C5 7 8 7 10 9" fill="none" stroke="#ff9a2a" stroke-width="2"/></svg>
<svg class="a" style="left:601px;top:1048px;" width="23" height="23" viewBox="0 0 23 23"><circle cx="11.5" cy="11.5" r="10.6" fill="#0c0c0e" stroke="#d8d8d8" stroke-width="1.1"/><path d="M11.5 11.5C9 9 8 6 10 3.5M11.5 11.5C14.5 10.5 17.5 11 18.5 14M11.5 11.5C11 15 8.5 17 5.5 16.5" fill="none" stroke="#9a9a9a" stroke-width="1.2"/><circle cx="11.5" cy="11.5" r="2.2" fill="#0c0c0e"/></svg>
<svg class="a" style="left:649px;top:1049px;" width="25" height="22" viewBox="0 0 25 22"><rect x="8" y="0" width="17" height="22" rx="1" fill="#2b7cd3"/><rect x="8" y="7" width="17" height="8" fill="#185abd"/><rect x="0" y="4" width="14" height="13" rx="1" fill="#1851b3"/><path d="M2.5 7.5L4.5 14L7 9L9.5 14L11.5 7.5" fill="none" stroke="#fff" stroke-width="1.4"/></svg>
<svg class="a" style="left:703px;top:1049px;" width="17" height="22" viewBox="0 0 17 22"><rect x="0" y="0" width="4.5" height="22" fill="#151a3a"/><rect x="0" y="0" width="9" height="4.5" fill="#151a3a"/><rect x="10" y="0.5" width="6" height="4" fill="#3fb3c8"/><rect x="5" y="9.5" width="4.5" height="4" fill="#d9603e"/><rect x="10" y="9.5" width="4" height="4" fill="#2f8fa5"/><rect x="5" y="17.5" width="11" height="4" fill="#3fb3c8"/></svg>
<div class="a" style="left:593px;top:1078px;width:40px;height:2px;background:#76b9ed;"></div>
<div class="a" style="left:642px;top:1078px;width:40px;height:2px;background:#76b9ed;"></div>
<div class="a" style="left:687px;top:1078px;width:48px;height:2px;background:#76b9ed;"></div>
<div class="t" style="left:1873px;top:1045px;color:#fff;font-size:12px;transform:scaleX(0.88);transform-origin:0 0">15:05</div>
<div class="t" style="left:1861px;top:1062px;color:#fff;font-size:12px;transform:scaleX(0.93);transform-origin:0 0">13.11.2020</div>
<div class="a" style="left:567px;top:146px;width:786px;height:742px;background:#fff;border:1px solid #555;border-top:none;box-shadow:0 5px 16px rgba(0,0,0,0.38)"></div>
<div class="a" style="left:579px;top:153px;width:3px;height:15px;background:#0d1530;"></div>
<div class="a" style="left:582px;top:153px;width:3px;height:3px;background:#0d1530;"></div>
<div class="a" style="left:585px;top:153px;width:4px;height:3px;background:#3d9ab8;"></div>
<div class="a" style="left:582px;top:159px;width:4px;height:3px;background:#c9544a;"></div>
<div class="a" style="left:586px;top:159px;width:2px;height:3px;background:#2b7f95;"></div>
<div class="a" style="left:582px;top:165px;width:7px;height:3px;background:#3d9ab8;"></div>
<div class="t" style="left:597px;top:155px;color:#111;font-size:12px;">Detail položky rozpočtu</div>
<div class="a" style="left:1233px;top:160px;width:11px;height:1px;background:#222;"></div>
<div class="a" style="left:1278px;top:155px;width:11px;height:11px;background:transparent;border:1.5px solid #222"></div>
<svg class="a" style="left:1323px;top:154px;" width="13" height="13" viewBox="0 0 13 13"><path d="M1 1L12 12M12 1L1 12" stroke="#222" stroke-width="1.3"/></svg>
<div class="a" style="left:568px;top:176px;width:200px;height:673px;background:#00abbf;"></div>
<div class="a" style="left:582px;top:192px;width:16px;height:2px;background:#eaffff;"></div>
<div class="a" style="left:582px;top:197px;width:16px;height:2px;background:#eaffff;"></div>
<div class="a" style="left:582px;top:202px;width:16px;height:2px;background:#eaffff;"></div>
<div class="a" style="left:568px;top:220px;width:200px;height:44px;background:#075e69;"></div>
<svg class="a" style="left:580px;top:230px;" width="21" height="24" viewBox="0 0 21 24"><path d="M1.5 1.5H12L17.5 7V21.5H1.5Z" fill="none" stroke="#b8dde2" stroke-width="1.1"/><path d="M12 1.5V7H17.5" fill="none" stroke="#b8dde2" stroke-width="1.1"/><path d="M4 6H9M4 9H14M4 12H9" stroke="#b8dde2" stroke-width="1"/><circle cx="12" cy="16" r="4" fill="none" stroke="#b8dde2" stroke-width="1.3"/><path d="M15 19L19 23" stroke="#b8dde2" stroke-width="1.6"/></svg>
<svg class="a" style="left:580px;top:274px;" width="21" height="24" viewBox="0 0 21 24"><path d="M1.5 1.5H12L17.5 7V21.5H1.5Z" fill="none" stroke="#c9f1f6" stroke-width="1.1"/><path d="M12 1.5V7H17.5" fill="none" stroke="#c9f1f6" stroke-width="1.1"/><path d="M4 6H9M4 9H14M4 12H9" stroke="#c9f1f6" stroke-width="1"/><rect x="9.5" y="13.5" width="9" height="9" fill="none" stroke="#c9f1f6" stroke-width="1.1"/><path d="M9.5 16.5H18.5M9.5 19.5H18.5M12.5 13.5V22.5M15.5 13.5V22.5" stroke="#c9f1f6" stroke-width="0.9"/></svg>
<svg class="a" style="left:580px;top:318px;" width="21" height="24" viewBox="0 0 21 24"><path d="M1.5 1.5H12L17.5 7V21.5H1.5Z" fill="none" stroke="#c9f1f6" stroke-width="1.1"/><path d="M12 1.5V7H17.5" fill="none" stroke="#c9f1f6" stroke-width="1.1"/><path d="M4 6H9M4 9H14M4 12H9" stroke="#c9f1f6" stroke-width="1"/><rect x="9.5" y="13.5" width="9" height="9" fill="none" stroke="#c9f1f6" stroke-width="1.1"/><path d="M9.5 16.5H18.5M9.5 19.5H18.5M12.5 13.5V22.5M15.5 13.5V22.5" stroke="#c9f1f6" stroke-width="0.9"/></svg>
<div class="t" style="left:616px;top:237px;color:#eaffff;font-size:12px;">Přehled</div>
<div class="t" style="left:616px;top:282px;color:#eaffff;font-size:12px;">Výkaz výměr</div>
<div class="t" style="left:616px;top:326px;color:#eaffff;font-size:12px;">Specifikace</div>
<div class="a" style="left:768px;top:176px;width:584px;height:673px;background:#f2f2f2;"></div>
<div class="t" style="left:798px;top:207px;color:#333;font-size:12px;">Kód</div>
<div class="t" style="left:968px;top:207px;color:#333;font-size:12px;">Var.</div>
<div class="t" style="left:1020px;top:207px;color:#333;font-size:12px;">PČ</div>
<div class="t" style="left:1072px;top:207px;color:#333;font-size:12px;">Cenová soustava</div>
<div class="a" style="left:792px;top:222px;width:161px;height:31px;background:#fff;border:1px solid #d2d2d2"></div>
<div class="t" style="left:799px;top:231px;color:#3a3a3a;font-size:15.5px;margin-top:-1px">01222</div>
<svg class="a" style="left:938px;top:234px;" width="12" height="3" viewBox="0 0 12 3"><circle cx="1.5" cy="1.5" r="1.1" fill="#333"/><circle cx="6" cy="1.5" r="1.1" fill="#333"/><circle cx="10.5" cy="1.5" r="1.1" fill="#333"/></svg>
<svg class="a" style="left:955px;top:240px;" width="5" height="5" viewBox="0 0 5 5"><circle cx="2.5" cy="2.5" r="1.5" fill="#444"/></svg>
<div class="a" style="left:962px;top:222px;width:40px;height:31px;background:#fff;border:1px solid #d2d2d2"></div>
<div class="a" style="left:1014px;top:222px;width:40px;height:31px;background:#fff;border:1px solid #d2d2d2"></div>
<div class="t" style="right:873px;top:232px;color:#555;font-size:13.5px;">3</div>
<div class="a" style="left:1066px;top:222px;width:218px;height:31px;background:#fff;border:1px solid #d2d2d2"></div>
<div class="t" style="left:1073px;top:232px;color:#a8a8a8;font-size:13.5px;">Bez vazby na CS</div>
<svg class="a" style="left:1270px;top:235px;" width="10" height="5" viewBox="0 0 10 5"><path d="M0 0H10L5 5Z" fill="#444"/></svg>
<div class="a" style="left:1296px;top:222px;width:32px;height:30px;background:#f0f0f0;border:1.5px solid #2b7480"></div>
<svg class="a" style="left:1306px;top:228px;" width="12" height="17" viewBox="0 0 12 17"><path d="M1 1V16" stroke="#999" stroke-width="1"/><path d="M2 1.5L10 6L2 10.5Z" fill="none" stroke="#aaa" stroke-width="1"/></svg>
<div class="t" style="left:798px;top:263px;color:#333;font-size:12px;">Název</div>
<div class="a" style="left:792px;top:280px;width:536px;height:29px;background:#fff;border:1px solid #d2d2d2"></div>
<div class="t" style="left:799px;top:289px;color:#555;font-size:13px;letter-spacing:-0.15px;margin-top:-1px">POJIŠTĚNÍ STAVEBNÍHO VYBAVENÍ DLE USTANOVENÍ ZDP</div>
<div class="t" style="left:798px;top:319px;color:#333;font-size:12px;">Množství</div>
<div class="t" style="left:1072px;top:319px;color:#333;font-size:12px;">Měrná jednotka</div>
<div class="a" style="left:792px;top:336px;width:262px;height:30px;background:#fff;border:1px solid #d2d2d2"></div>
<div class="t" style="right:873px;top:345px;color:#8a8a8a;font-size:13.5px;">51,000</div>
<div class="a" style="left:1066px;top:336px;width:262px;height:30px;background:#fff;border:1px solid #d2d2d2"></div>
<div class="t" style="left:1073px;top:345px;color:#555;font-size:13px;">KPL</div>
<svg class="a" style="left:1312px;top:349px;" width="12" height="3" viewBox="0 0 12 3"><circle cx="1.5" cy="1.5" r="1.1" fill="#333"/><circle cx="6" cy="1.5" r="1.1" fill="#333"/><circle cx="10.5" cy="1.5" r="1.1" fill="#333"/></svg>
<div class="t" style="left:786px;top:379px;color:#555;font-size:16px;">Cena</div>
<div class="a" style="left:830px;top:388px;width:478px;height:1px;background:#c8c8c8;"></div>
<svg class="a" style="left:1318px;top:383px;" width="11" height="9" viewBox="0 0 11 9"><path d="M0 9H11L5.5 0Z" fill="#333"/></svg>
<div class="t" style="left:798px;top:410px;color:#333;font-size:12px;">JOC</div>
<div class="t" style="left:1072px;top:410px;color:#333;font-size:12px;">OC Celkem</div>
<div class="a" style="left:792px;top:426px;width:262px;height:30px;background:#fff;border:1px solid #d2d2d2"></div>
<div class="t" style="right:873px;top:435px;color:#6a6a6a;font-size:13.5px;">0,00</div>
<div class="a" style="left:1066px;top:426px;width:262px;height:30px;background:#fff;border:1px solid #d2d2d2"></div>
<div class="t" style="right:599px;top:435px;color:#9a9a9a;font-size:13.5px;">0,00</div>
<div class="t" style="left:798px;top:466px;color:#333;font-size:12px;">Sazba DPH</div>
<div class="t" style="left:1072px;top:466px;color:#333;font-size:12px;">DPH</div>
<div class="a" style="left:792px;top:483px;width:262px;height:30px;background:#fff;border:1px solid #d2d2d2"></div>
<div class="t" style="left:799px;top:492px;color:#555;font-size:13px;">21,00 %</div>
<svg class="a" style="left:1039px;top:495px;" width="10" height="5" viewBox="0 0 10 5"><path d="M0 0H10L5 5Z" fill="#444"/></svg>
<div class="a" style="left:1066px;top:483px;width:262px;height:30px;background:#fff;border:1px solid #d2d2d2"></div>
<div class="t" style="right:599px;top:492px;color:#9a9a9a;font-size:13.5px;">0,00</div>
<div class="a" style="left:792px;top:539px;width:14px;height:14px;background:#fff;border:1px solid #d2d2d2"></div>
<div class="t" style="left:810px;top:541px;color:#333;font-size:12px;">Fixní OC</div>
<div class="t" style="left:1072px;top:522px;color:#333;font-size:12px;">Celkem s DPH</div>
<div class="a" style="left:1066px;top:539px;width:262px;height:30px;background:#fff;border:1px solid #d2d2d2"></div>
<div class="t" style="right:599px;top:547px;color:#5a5a5a;font-size:15.5px;">0,00</div>
<div class="t" style="left:786px;top:582px;color:#555;font-size:16px;">Marže</div>
<div class="a" style="left:839px;top:592px;width:469px;height:1px;background:#c8c8c8;"></div>
<svg class="a" style="left:1318px;top:586px;" width="11" height="9" viewBox="0 0 11 9"><path d="M0 9H11L5.5 0Z" fill="#333"/></svg>
<div class="t" style="left:798px;top:613px;color:#333;font-size:12px;">Marže %</div>
<div class="t" style="left:1072px;top:613px;color:#333;font-size:12px;">Marže celkem</div>
<div class="a" style="left:792px;top:630px;width:125px;height:30px;background:#fff;border:1px solid #d2d2d2"></div>
<div class="t" style="right:1010px;top:639px;color:#6a6a6a;font-size:13.5px;">0,00</div>
<div class="a" style="left:929px;top:630px;width:125px;height:30px;background:#fff;border:1px solid #d2d2d2"></div>
<div class="t" style="right:873px;top:639px;color:#6a6a6a;font-size:13.5px;">0,00</div>
<div class="a" style="left:1066px;top:630px;width:262px;height:30px;background:#fff;border:1px solid #d2d2d2"></div>
<div class="t" style="right:599px;top:639px;color:#9a9a9a;font-size:13.5px;">0,00</div>
<div class="t" style="left:798px;top:669px;color:#333;font-size:12px;">JNC</div>
<div class="t" style="left:1072px;top:669px;color:#333;font-size:12px;">NC Celkem</div>
<div class="a" style="left:792px;top:686px;width:262px;height:30px;background:#fff;border:1px solid #d2d2d2"></div>
<div class="t" style="right:873px;top:695px;color:#6a6a6a;font-size:13.5px;">0,00</div>
<div class="a" style="left:1066px;top:686px;width:262px;height:30px;background:#fff;border:1px solid #d2d2d2"></div>
<div class="t" style="right:599px;top:695px;color:#9a9a9a;font-size:13.5px;">0,00</div>
<div class="a" style="left:1192px;top:853px;width:70px;height:30px;background:#00abbf;"></div>
<div class="t" style="left:1218px;top:862px;color:#f0ffff;font-size:13px;">OK</div>
<div class="a" style="left:1269px;top:853px;width:70px;height:30px;background:#00abbf;"></div>
<div class="t" style="left:1285px;top:862px;color:#f0ffff;font-size:13px;">Storno</div>
<svg class="a" style="left:1339px;top:873px;" width="12" height="12" viewBox="0 0 12 12"><g fill="#b8b8b8"><rect x="9" y="0" width="1.2" height="1.2"/><rect x="6" y="3" width="1.2" height="1.2"/><rect x="9" y="3" width="1.2" height="1.2"/><rect x="3" y="6" width="1.2" height="1.2"/><rect x="6" y="6" width="1.2" height="1.2"/><rect x="9" y="6" width="1.2" height="1.2"/><rect x="0" y="9" width="1.2" height="1.2"/><rect x="3" y="9" width="1.2" height="1.2"/><rect x="6" y="9" width="1.2" height="1.2"/><rect x="9" y="9" width="1.2" height="1.2"/></g></svg>
<div class="a" style="left:1297px;top:252px;width:114px;height:82px;background:#fff;border:1px solid #d8d8d8;box-shadow:2px 3px 5px rgba(0,0,0,0.25)"></div>
<div class="a" style="left:1299px;top:255px;width:24px;height:23px;background:#2e98a6;"></div>
<svg class="a" style="left:1306.0px;top:259px;" width="11" height="17" viewBox="0 0 11 17"><path d="M1.5 0V16" stroke="#8a8a8a" stroke-width="1"/><path d="M2 0.8L10 5.5L2 10.2Z" fill="#e5202e"/></svg>
<svg class="a" style="left:1333.6px;top:259px;" width="11" height="17" viewBox="0 0 11 17"><path d="M1.5 0V16" stroke="#8a8a8a" stroke-width="1"/><path d="M2 0.8L10 5.5L2 10.2Z" fill="#f4d03f"/></svg>
<svg class="a" style="left:1361.2px;top:259px;" width="11" height="17" viewBox="0 0 11 17"><path d="M1.5 0V16" stroke="#8a8a8a" stroke-width="1"/><path d="M2 0.8L10 5.5L2 10.2Z" fill="#1fb04b"/></svg>
<svg class="a" style="left:1388.8px;top:259px;" width="11" height="17" viewBox="0 0 11 17"><path d="M1.5 0V16" stroke="#8a8a8a" stroke-width="1"/><path d="M2 0.8L10 5.5L2 10.2Z" fill="#1a237e"/></svg>
<svg class="a" style="left:1305.0px;top:287px;" width="11" height="17" viewBox="0 0 11 17"><path d="M1.5 0V16" stroke="#8a8a8a" stroke-width="1"/><path d="M2 0.8L10 5.5L2 10.2Z" fill="#ef6fa8"/></svg>
<svg class="a" style="left:1332.6px;top:287px;" width="11" height="17" viewBox="0 0 11 17"><path d="M1.5 0V16" stroke="#8a8a8a" stroke-width="1"/><path d="M2 0.8L10 5.5L2 10.2Z" fill="#e67e22"/></svg>
<svg class="a" style="left:1360.2px;top:287px;" width="11" height="17" viewBox="0 0 11 17"><path d="M1.5 0V16" stroke="#8a8a8a" stroke-width="1"/><path d="M2 0.8L10 5.5L2 10.2Z" fill="#b05ccf"/></svg>
<svg class="a" style="left:1387.8px;top:287px;" width="11" height="17" viewBox="0 0 11 17"><path d="M1.5 0V16" stroke="#8a8a8a" stroke-width="1"/><path d="M2 0.8L10 5.5L2 10.2Z" fill="#3bd5e8"/></svg>
<div class="a" style="left:1299px;top:311px;width:108px;height:20px;background:#eeeeee;"></div>
<div class="t" style="left:1335px;top:316px;color:#666;font-size:12px;">Žádný</div>
<div class="a" style="left:1312px;top:298px;width:57px;height:22px;background:#fff;border:1px solid #cfcfcf"></div>
<div class="t" style="left:1320px;top:303px;color:#333;font-size:12px;">Červená</div>
<svg class="a" style="left:1312px;top:270px;" width="13" height="20" viewBox="0 0 13 20"><path d="M1 1V16L4.5 12.5L7.5 19L10 18L7 11.5H12Z" fill="#fff" stroke="#111" stroke-width="1"/></svg>
</body></html>
